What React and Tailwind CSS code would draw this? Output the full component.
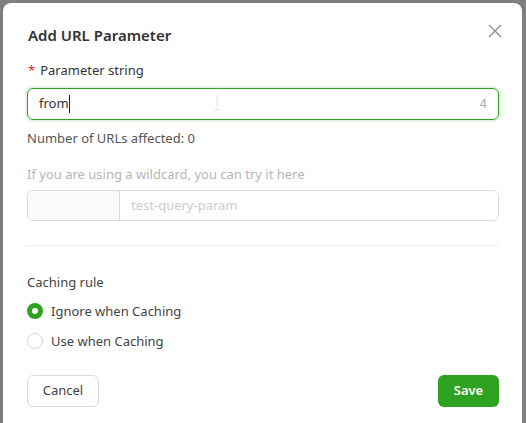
import React from "react";

const CloseIcon = () => (
  <svg width="14" height="14" viewBox="0 0 14 14" fill="none">
    <path d="M1 1L13 13M13 1L1 13" stroke="#8c8c8c" strokeWidth="1.3" />
  </svg>
);

const Radio = ({ checked, label }) => (
  <label className="flex items-center gap-[8px] h-[20px]">
    {checked ? (
      <span className="w-[16px] h-[16px] rounded-full bg-[#2ea121] flex items-center justify-center">
        <span className="w-[6px] h-[6px] rounded-full bg-white" />
      </span>
    ) : (
      <span className="w-[16px] h-[16px] rounded-full border border-[#d9d9d9] bg-white" />
    )}
    <span className="text-[13px] leading-[20px] text-[#444]">{label}</span>
  </label>
);

const App = () => {
  return (
    <div
      className="w-[526px] h-[423px] overflow-hidden bg-[#7f7f7f] pt-[3px] pl-[3px] pr-[4px]"
      style={{ fontFamily: '"Noto Sans", "Open Sans", sans-serif' }}
    >
      <div className="bg-white rounded-t-[8px] h-[440px] pl-[24px] pr-[23px] pt-[20px] relative">
        <div className="flex items-center justify-between h-[24px]">
          <h2 className="text-[15px] font-semibold text-[#333] pl-[1px]">
            Add URL Parameter
          </h2>
          <button className="mr-[-3px] mt-[-8px]">
            <CloseIcon />
          </button>
        </div>

        <div className="mt-[13px] text-[13px] leading-[20px] text-[#333] flex items-center h-[20px]">
          <span className="text-[#e5242b] mr-[5px] pl-[1px]">*</span>
          Parameter string
        </div>

        <div className="mt-[8px] h-[32px] rounded-[6px] border border-[#2ea121] shadow-[0_0_0_2px_rgba(46,161,33,0.12)] flex items-center px-[11px] relative">
          <span className="text-[13px] text-[#333]">from</span>
          <span className="w-[1px] h-[18px] bg-[#222]" />
          <span className="ml-auto text-[13px] text-[#aaa]">4</span>
          <svg
            className="absolute left-[185px] top-[6px]"
            width="8"
            height="16"
            viewBox="0 0 8 16"
            fill="none"
          >
            <path d="M1 1H7M4 1V15M1 15H7" stroke="#e4e4e4" strokeWidth="1" />
          </svg>
        </div>

        <div className="mt-[8px] text-[13px] text-[#555] h-[20px] leading-[20px]">
          Number of URLs affected: 0
        </div>

        <div className="mt-[16px] text-[13px] text-[#b5b5b5] h-[20px] leading-[20px]">
          If you are using a wildcard, you can try it here
        </div>

        <div className="mt-[6px] h-[31px] flex rounded-[6px] border border-[#d9d9d9] overflow-hidden">
          <div className="w-[92px] bg-[#fafafa] border-r border-[#d9d9d9]" />
          <div className="flex-1 flex items-center px-[11px] text-[13px] text-[#cdcdcd]">
            test-query-param
          </div>
        </div>

        <div className="mt-[24px] h-[1px] bg-[#ececec]" />

        <div className="mt-[26px] text-[13px] text-[#444] h-[20px] leading-[20px]">
          Caching rule
        </div>

        <div className="mt-[9px] flex flex-col gap-[10px]">
          <Radio checked label="Ignore when Caching" />
          <Radio label="Use when Caching" />
        </div>

        <div className="mt-[24px] flex justify-between">
          <button className="h-[32px] w-[72px] rounded-[6px] border border-[#d9d9d9] text-[13px] text-[#444] bg-white">
            Cancel
          </button>
          <button className="h-[32px] w-[61px] rounded-[6px] bg-[#2ea121] text-[13px] text-white font-semibold">
            Save
          </button>
        </div>
      </div>
    </div>
  );
};

export default App;
